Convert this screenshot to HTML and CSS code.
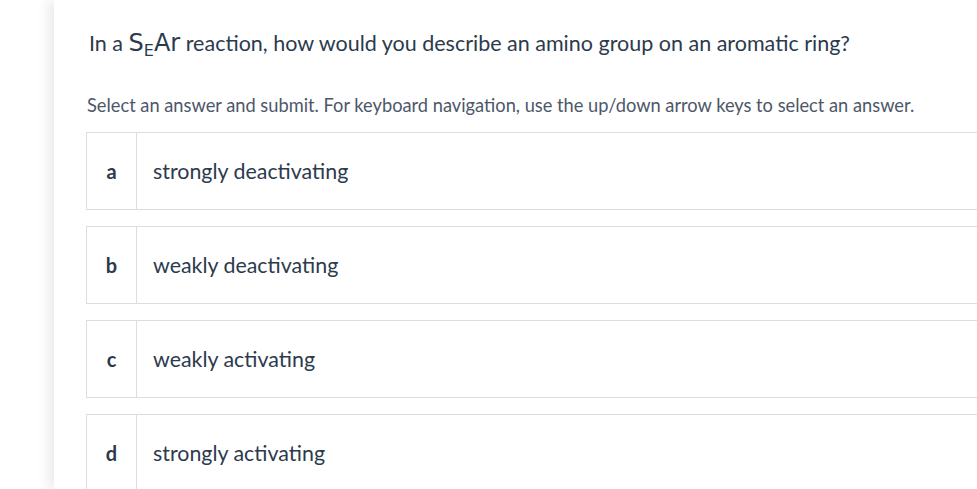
FILE: index.html
```html
<!DOCTYPE html>
<html lang="en">
<head>
<meta charset="utf-8">
<title>Question</title>
<link rel="stylesheet" href="styles.css">
</head>
<body>
<div class="page">
  <main class="panel">
    <h1 class="question">In a <span class="chem">S<sub>E</sub>Ar</span> reaction, how would you describe an amino group on an aromatic ring?</h1>
    <p class="hint">Select an answer and submit. For keyboard navigation, use the up/down arrow keys to select an answer.</p>
    <ul class="options">
      <li class="option"><span class="letter">a</span><span class="label">strongly deactivating</span></li>
      <li class="option"><span class="letter">b</span><span class="label">weakly deactivating</span></li>
      <li class="option"><span class="letter">c</span><span class="label">weakly activating</span></li>
      <li class="option"><span class="letter">d</span><span class="label">strongly activating</span></li>
    </ul>
  </main>
</div>
</body>
</html>
```
FILE: styles.css
```css
html, body {
  margin: 0;
  padding: 0;
  background: #ffffff;
  overflow: hidden;
  height: 100%;
}
body {
  font-family: "Lato", "Open Sans", sans-serif;
  color: #2d3b4e;
}
.page {
  padding-left: 54px;
  height: 100%;
  box-sizing: border-box;
}
.panel {
  height: 100%;
  background: #ffffff;
  box-shadow: -6px 0 12px rgba(0, 0, 0, 0.08);
  padding: 25px 0 0 32px;
  box-sizing: border-box;
}
.question {
  margin: 0 0 0 3px;
  font-size: 21.5px;
  font-weight: 400;
  line-height: 36px;
  color: #2c3a4d;
  white-space: nowrap;
}
.chem {
  font-family: "DejaVu Sans", sans-serif;
  font-size: 24px;
}
.chem sub {
  font-size: 16px;
  vertical-align: -5px;
  line-height: 0;
}
.hint {
  margin: 31px 0 0 1px;
  font-size: 18.25px;
  line-height: 26px;
  color: #4d5769;
  white-space: nowrap;
}
.options {
  list-style: none;
  margin: 14px 0 0 0;
  padding: 0;
  display: flex;
  flex-direction: column;
  gap: 16px;
}
.option {
  display: flex;
  height: 78px;
  box-sizing: border-box;
  border: 1px solid #dcdde2;
  border-right: none;
  align-items: stretch;
}
.letter {
  flex: 0 0 49px;
  border-right: 1px solid #dcdde2;
  display: flex;
  align-items: center;
  justify-content: center;
  font-size: 20px;
  font-weight: 700;
  color: #2c3a4d;
}
.label {
  display: flex;
  align-items: center;
  padding-left: 16px;
  font-size: 21.4px;
  color: #2c3a4d;
}
```
